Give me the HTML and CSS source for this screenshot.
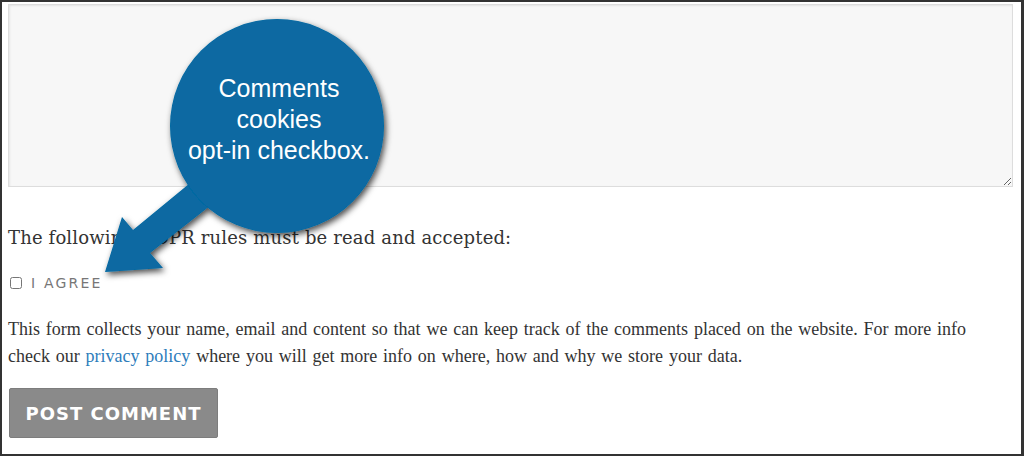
FILE: index.html
```html
<!DOCTYPE html>
<html lang="en">
<head>
    <meta charset="UTF-8">
    <title>Comment form</title>
    <link rel="stylesheet" href="styles.css">
</head>
<body>
<div id="frame">
    <form id="comment-form">
        <textarea class="comment-box"></textarea>
        <h3 class="rules-title">The following GDPR rules must be read and accepted:</h3>
        <label class="agree"><input type="checkbox" class="agree-box"><span>I AGREE</span></label>
        <p class="notice">This form collects your name, email and content so that we can keep track of the comments placed on the website. For more info check our <a href="#">privacy policy</a> where you will get more info on where, how and why we store your data.</p>
        <button type="button" class="post-btn">POST COMMENT</button>
    </form>
    <!-- callout -->
    <svg class="callout" width="1024" height="456" viewBox="0 0 1024 456">
        <defs>
            <filter id="shade" x="-20%" y="-20%" width="140%" height="140%">
                <feDropShadow dx="2" dy="3" stdDeviation="3" flood-color="#000" flood-opacity="0.7"/>
            </filter>
        </defs>
        <g filter="url(#shade)" fill="#0769a2">
            <polygon points="195,179 225,194 150,253 163,268 105,272 122,217 133,230"/>
            <circle cx="277" cy="126" r="107"/>
        </g>
        <text class="callout-text" x="279" y="97">Comments</text>
        <text class="callout-text" x="279" y="128">cookies</text>
        <text class="callout-text" x="279" y="159">opt-in checkbox.</text>
    </svg>
</div>
</body>
</html>
```

FILE: styles.css
```css
* {
    margin: 0;
    padding: 0;
    box-sizing: border-box;
}
body {
    width: 1024px;
    height: 456px;
    overflow: hidden;
    background: #fff;
}
#frame {
    position: relative;
    width: 1024px;
    height: 456px;
    border: 2px solid #333;
    border-right-width: 3px;
    padding: 2px 8px 0 6px;
}
#comment-form {
    display: flex;
    flex-direction: column;
    align-items: flex-start;
}
.comment-box {
    display: block;
    width: 1005px;
    height: 183px;
    background: #f7f7f7;
    border: 1px solid #ddd;
    box-shadow: inset 1px 1px 2px rgba(0, 0, 0, 0.08);
}
.rules-title {
    margin-top: 39px;
    font-family: "DejaVu Serif", serif;
    font-weight: normal;
    font-size: 18px;
    letter-spacing: 0.15px;
    color: #333;
    line-height: 24px;
}
.agree {
    display: flex;
    align-items: center;
    gap: 9px;
    margin-top: 25px;
    padding-left: 2px;
    font-family: "DejaVu Sans", sans-serif;
    font-size: 14px;
    letter-spacing: 2.2px;
    color: #777;
}
.agree-box {
    width: 12px;
    height: 12px;
    margin: 0;
}
.notice {
    max-width: 975px;
    margin-top: 25px;
    font-family: "Liberation Serif", serif;
    font-size: 18px;
    word-spacing: 1.3px;
    line-height: 27px;
    color: #333;
}
.notice a {
    color: #2e7dbb;
    text-decoration: none;
}
.post-btn {
    margin-top: 18px;
    margin-left: 1px;
    width: 209px;
    height: 50px;
    background: #8a8a8a;
    border: 1px solid #7d7d7d;
    border-radius: 2px;
    font-family: "DejaVu Sans", sans-serif;
    font-weight: bold;
    font-size: 18px;
    letter-spacing: 1px;
    color: #fff;
}
.callout {
    position: absolute;
    left: -2px;
    top: -2px;
    pointer-events: none;
}
.callout-text {
    font-family: "Liberation Sans", Arial, sans-serif;
    font-size: 25px;
    fill: #fff;
    text-anchor: middle;
}
```
